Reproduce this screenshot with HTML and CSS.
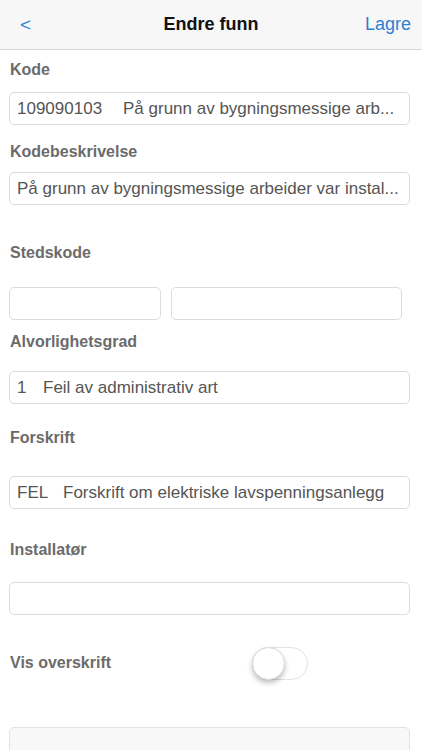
FILE: index.html
```html
<html>
	<head>
		<title>Endre funn</title>
		<link rel="stylesheet" href="styles.css">
	</head>
	<body>
		<div class="navbar">
			<a href="#" class="back">&lt;</a>
			<span class="title">Endre funn</span>
			<a href="#" class="save">Lagre</a>
		</div>

		<div class="form">
			<div class="label first">Kode</div>
			<div class="field gap-12"><span class="code">109090103</span>På grunn av bygningsmessige arb...</div>

			<div class="label gap-17">Kodebeskrivelse</div>
			<div class="field gap-10">På grunn av bygningsmessige arbeider var instal...</div>

			<div class="label gap-38">Stedskode</div>
			<div class="pair gap-24">
				<div class="field small"></div>
				<div class="field wide"></div>
			</div>

			<div class="label gap-12">Alvorlighetsgrad</div>
			<div class="field gap-19"><span class="code short">1</span>Feil av administrativ art</div>

			<div class="label gap-24">Forskrift</div>
			<div class="field gap-28"><span class="code mid">FEL</span>Forskrift om elektriske lavspenningsanlegg</div>

			<div class="label gap-31">Installatør</div>
			<div class="field gap-22"></div>

			<div class="toggle-row gap-31">
				<div class="label">Vis overskrift</div>
				<div class="toggle"><div class="knob"></div></div>
			</div>

			<div class="textarea"></div>
		</div>
	</body>
</html>
```

FILE: styles.css
```css
body {
	margin: 0;
	font-family: "Liberation Sans", Arial, Helvetica, sans-serif;
	background-color: #fff;
}

.navbar {
	height: 49px;
	background-color: #f7f7f8;
	border-bottom: 1px solid #d6d6d6;
	display: flex;
	align-items: center;
	justify-content: space-between;
	padding: 0px 11px 0px 20px;
	position: relative;
}

.navbar a {
	color: #2f7fd3;
	text-decoration: none;
	font-size: 18px;
}

.navbar a.back {
	font-size: 19px;
}

.title {
	position: absolute;
	left: 0;
	right: 0;
	text-align: center;
	font-size: 18px;
	font-weight: bold;
	color: #111;
	pointer-events: none;
}

.form {
	padding: 0px 12px 0px 9px;
}

.label {
	font-size: 16px;
	line-height: 20px;
	font-weight: bold;
	color: #6b6b6b;
	padding-left: 1px;
}

.label.first { margin-top: 10px; }

.field {
	height: 31px;
	border: 1px solid #dcdcdc;
	border-radius: 5px;
	font-size: 17px;
	line-height: 31px;
	color: #555;
	padding-left: 7px;
	white-space: nowrap;
	overflow: hidden;
}

.code {
	display: inline-block;
	width: 106px;
}

.code.short { width: 26px; }
.code.mid { width: 46px; }

.pair {
	display: flex;
	gap: 10px;
	padding-right: 8px;
}

.field.small { width: 143px; }
.field.wide { flex: 1; }

.gap-10 { margin-top: 10px; }
.gap-12 { margin-top: 12px; }
.gap-17 { margin-top: 17px; }
.gap-19 { margin-top: 19px; }
.gap-22 { margin-top: 22px; }
.gap-24 { margin-top: 24px; }
.gap-28 { margin-top: 28px; }
.gap-31 { margin-top: 31px; }
.gap-38 { margin-top: 38px; }

.toggle-row {
	display: grid;
	grid-template-columns: 243px auto;
	align-items: center;
	height: 34px;
}

.toggle {
	width: 54px;
	height: 31px;
	border: 1px solid #e2e2e2;
	border-radius: 17px;
	background-color: #fff;
	position: relative;
}

.knob {
	position: absolute;
	left: -1px;
	top: -1px;
	width: 31px;
	height: 31px;
	border-radius: 50%;
	background-color: #fff;
	border: 1px solid #d8d8d8;
	box-shadow: 0px 3px 5px rgba(0, 0, 0, 0.25);
}

.textarea {
	margin-top: 47px;
	height: 60px;
	border: 1px solid #e2e2e2;
	border-radius: 5px;
	background-color: #f8f8f8;
}
```
